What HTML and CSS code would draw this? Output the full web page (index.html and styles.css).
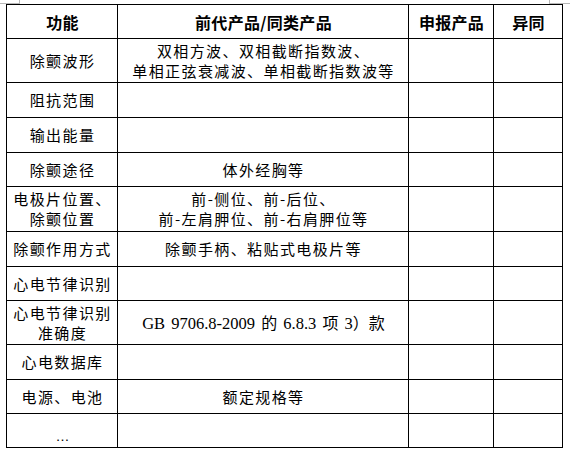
FILE: index.html
```html
<!DOCTYPE html>
<html lang="zh">
<head>
<meta charset="utf-8">
<title>功能对比表</title>
<link rel="stylesheet" href="styles.css">
</head>
<body>
<div class="mark mark-left"></div>
<div class="mark mark-right"></div>
<div class="table">
  <div class="cell head">功能</div>
  <div class="cell head">前代产品/同类产品</div>
  <div class="cell head">申报产品</div>
  <div class="cell head">异同</div>

  <div class="cell">除颤波形</div>
  <div class="cell">双相方波、双相截断指数波、<br>单相正弦衰减波、单相截断指数波等</div>
  <div class="cell"></div>
  <div class="cell"></div>

  <div class="cell">阻抗范围</div>
  <div class="cell"></div>
  <div class="cell"></div>
  <div class="cell"></div>

  <div class="cell">输出能量</div>
  <div class="cell"></div>
  <div class="cell"></div>
  <div class="cell"></div>

  <div class="cell">除颤途径</div>
  <div class="cell">体外经胸等</div>
  <div class="cell"></div>
  <div class="cell"></div>

  <div class="cell">电极片位置、<br>除颤位置</div>
  <div class="cell">前-侧位、前-后位、<br>前-左肩胛位、前-右肩胛位等</div>
  <div class="cell"></div>
  <div class="cell"></div>

  <div class="cell">除颤作用方式</div>
  <div class="cell">除颤手柄、粘贴式电极片等</div>
  <div class="cell"></div>
  <div class="cell"></div>

  <div class="cell">心电节律识别</div>
  <div class="cell"></div>
  <div class="cell"></div>
  <div class="cell"></div>

  <div class="cell">心电节律识别<br>准确度</div>
  <div class="cell std"><span class="latin">GB 9706.8-2009 </span>的<span class="latin"> 6.8.3 </span>项<span class="latin"> 3</span>）款</div>
  <div class="cell"></div>
  <div class="cell"></div>

  <div class="cell">心电数据库</div>
  <div class="cell"></div>
  <div class="cell"></div>
  <div class="cell"></div>

  <div class="cell">电源、电池</div>
  <div class="cell">额定规格等</div>
  <div class="cell"></div>
  <div class="cell"></div>

  <div class="cell ellipsis">…</div>
  <div class="cell"></div>
  <div class="cell"></div>
  <div class="cell"></div>
</div>
</body>
</html>
```
FILE: styles.css
```css
html, body {
  margin: 0;
  padding: 0;
  background: #ffffff;
}

body {
  position: relative;
  width: 570px;
  height: 454px;
  overflow: hidden;
  font-family: "Noto Sans CJK SC", "Noto Sans", sans-serif;
  color: #000000;
}

.mark {
  position: absolute;
  top: 0;
  height: 3px;
  border-color: #b8b8b8;
  border-style: solid;
  border-width: 0;
}

.mark-left {
  left: 0;
  width: 19px;
  border-right-width: 1px;
  border-bottom-width: 1px;
}

.mark-right {
  left: 549px;
  width: 21px;
  border-left-width: 1px;
  border-bottom-width: 1px;
}

.table {
  margin: 4px 0 0 6px;
  width: 557px;
  display: grid;
  grid-template-columns: 110px 290px 84px 68px;
  grid-template-rows: 33px 43px 34px 34px 33px 44px 34px 33px 43px 34px 33px 33px;
  gap: 1px;
  padding: 1px;
  background: #000000;
  box-sizing: border-box;
}

.cell {
  background: #ffffff;
  display: flex;
  align-items: center;
  justify-content: center;
  text-align: center;
  font-size: 15px;
  letter-spacing: 1.4px;
  line-height: 20px;
  padding-left: 1px;
}

.head {
  font-size: 16px;
  font-weight: bold;
  letter-spacing: 0.3px;
}

.std {
  font-size: 16px;
  letter-spacing: 0;
  display: block;
  line-height: 43px;
  white-space: pre;
}

.latin {
  font-family: "Liberation Serif", serif;
  font-size: 16.5px;
  word-spacing: 2px;
}

.ellipsis {
  font-family: "Liberation Sans", sans-serif;
  font-size: 14px;
  letter-spacing: 0;
  padding-top: 10px;
  box-sizing: border-box;
}
```
